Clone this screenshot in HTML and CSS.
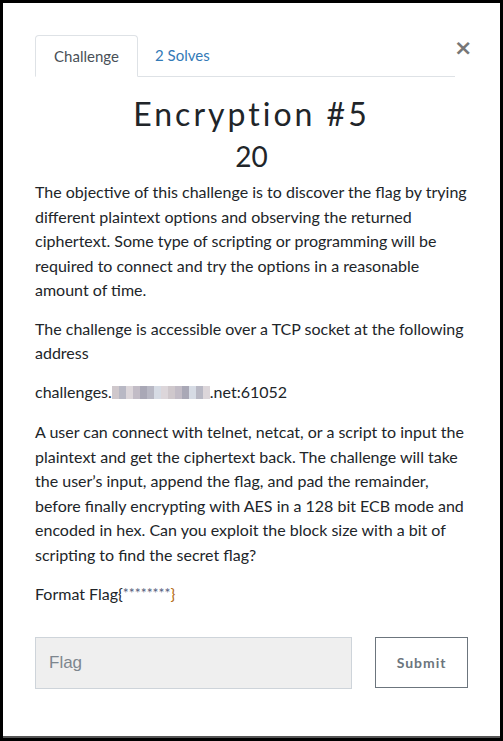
FILE: index.html
```html
<!DOCTYPE html>
<html>
<head>
<meta charset="utf-8">
<link rel="stylesheet" href="styles.css">
</head>
<body>
<div class="frame">
  <div class="modal">
    <div class="tabs-row">
      <div class="tabs">
        <div class="tab active">Challenge</div>
        <div class="tab link">2 Solves</div>
      </div>
      <div class="close">×</div>
    </div>
    <h1 class="title">Encryption #5</h1>
    <div class="value">20</div>
    <div class="desc">
      <p>The objective of this challenge is to discover the flag by trying different plaintext options and observing the returned ciphertext. Some type of scripting or programming will be required to connect and try the options in a reasonable amount of time.</p>
      <p>The challenge is accessible over a TCP socket at the following address</p>
      <p class="addr">challenges.<span class="blur"><i class="b1"></i><i class="b2"></i><i class="b3"></i><i class="b4"></i><i class="b5"></i><i class="b2"></i><i class="b6"></i><i class="b3"></i><i class="b1"></i><i class="b4"></i><i class="b5"></i><i class="b6"></i><i class="b2"></i><i class="b3"></i></span>.net:61052</p>
      <p>A user can connect with telnet, netcat, or a script to input the plaintext and get the ciphertext back. The challenge will take the user’s input, append the flag, and pad the remainder, before finally encrypting with AES in a 128 bit ECB mode and encoded in hex. Can you exploit the block size with a bit of scripting to find the secret flag?</p>
      <p>Format Flag{<span class="stars">********</span><span class="brace">}</span></p>
    </div>
    <div class="form">
      <input class="flag-input" type="text" placeholder="Flag">
      <button class="submit">Submit</button>
    </div>
  </div>
</div>
</body>
</html>
```

FILE: styles.css
```css
html, body {
  margin: 0;
  padding: 0;
  background: #000;
  width: 503px;
  height: 741px;
  overflow: hidden;
}
.frame {
  padding: 3px 3px 0 3px;
}
.modal {
  background: #fff;
  width: 497px;
  height: 733px;
  box-sizing: border-box;
  padding: 32px 32px 0 32px;
  font-family: Lato, "Open Sans", sans-serif;
  color: #212529;
  box-shadow: 0 2px 0 #555;
}
.tabs-row {
  display: flex;
  align-items: flex-start;
}
.tabs {
  display: flex;
  flex-shrink: 0;
  width: 420px;
  border-bottom: 1px solid #dee2e6;
  height: 41px;
}
.tab {
  font-size: 15px;
  padding: 0 16px;
  height: 41px;
  line-height: 41px;
  box-sizing: border-box;
}
.tab.active {
  border: 1px solid #dee2e6;
  border-bottom: 1px solid #fff;
  border-radius: 4px 4px 0 0;
  color: #495057;
  width: 103px;
  text-align: center;
  height: 42px;
}
.tab.link {
  color: #337ab7;
  padding-left: 17px;
}
.close {
  margin-left: -1px;
  margin-top: 2px;
  font-size: 22px;
  line-height: 22px;
  color: #777;
  font-family: "DejaVu Sans", sans-serif;
  font-weight: 700;
}
.title {
  margin: 17px 0 0 0;
  text-align: center;
  font-weight: 400;
  font-size: 32px;
  letter-spacing: 3px;
  line-height: 40px;
  color: #212529;
}
.value {
  text-align: center;
  font-size: 28px;
  line-height: 32px;
  margin-top: 6px;
}
.desc {
  margin-top: 8px;
  font-size: 16px;
  line-height: 24.5px;
}
.desc p {
  margin: 0 0 14px 0;
}
.desc p.addr {
  margin: 2px 0 16px 0;
}
.blur {
  display: inline-flex;
  vertical-align: -1px;
}
.blur i {
  display: inline-block;
  width: 7px;
  height: 13px;
}
.b1 { background: #cfc8cc; }
.b2 { background: #b8b8c4; }
.b3 { background: #dcd6da; }
.b4 { background: #c2bcc6; }
.b5 { background: #a9a8b6; }
.b6 { background: #d6dbe4; }
.stars {
  color: #56627e;
  font-size: 14px;
  vertical-align: 2px;
}
.brace {
  color: #b36b12;
}
.form {
  display: flex;
  margin-top: 30px;
}
.flag-input {
  width: 318px;
  height: 52px;
  box-sizing: border-box;
  background: #efefef;
  border: 1px solid #ced4da;
  padding: 0 13px;
  font-family: "Liberation Sans", Arial, sans-serif;
  font-size: 17px;
  color: #495057;
  outline: none;
}
.flag-input::placeholder {
  color: #7d868e;
}
.submit {
  margin-left: 23px;
  width: 93px;
  height: 51px;
  background: #fff;
  border: 1px solid #6c757d;
  font-family: Lato, sans-serif;
  font-weight: 700;
  font-size: 14px;
  letter-spacing: 1px;
  color: #6c757d;
}
```
